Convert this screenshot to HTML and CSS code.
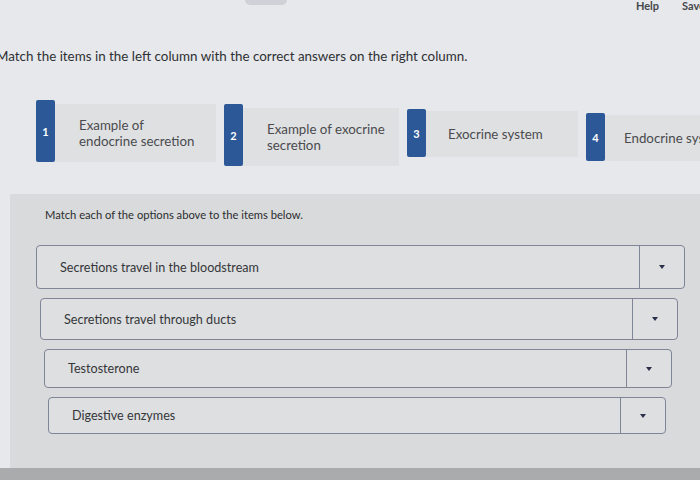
FILE: index.html
```html
<!DOCTYPE html>
<html>
<head>
<meta charset="utf-8">
<link rel="stylesheet" href="styles.css">
</head>
<body>
<div class="page">
  <div class="topbar">
    <span class="thumb"></span>
    <nav class="links"><span class="link">Help</span><span class="link">Save</span></nav>
  </div>
  <p class="title">Match the items in the left column with the correct answers on the right column.</p>

  <div class="choices">
    <div class="choice c1"><span class="badge">1</span><span class="label">Example of<br>endocrine secretion</span></div>
    <div class="choice c2"><span class="badge">2</span><span class="label">Example of exocrine<br>secretion</span></div>
    <div class="choice c3"><span class="badge">3</span><span class="label">Exocrine system</span></div>
    <div class="choice c4"><span class="badge">4</span><span class="label">Endocrine system</span></div>
  </div>

  <section class="panel">
    <p class="instr">Match each of the options above to the items below.</p>
    <div class="rows">
      <div class="row r1"><span class="item">Secretions travel in the bloodstream</span><span class="drop"><span class="arrow"></span></span></div>
      <div class="row r2"><span class="item">Secretions travel through ducts</span><span class="drop"><span class="arrow"></span></span></div>
      <div class="row r3"><span class="item">Testosterone</span><span class="drop"><span class="arrow"></span></span></div>
      <div class="row r4"><span class="item">Digestive enzymes</span><span class="drop"><span class="arrow"></span></span></div>
    </div>
  </section>
  <div class="bottom"></div>
</div>
</body>
</html>
```
FILE: styles.css
```css
* { box-sizing: border-box; }
html, body { margin: 0; padding: 0; }
body {
  width: 700px;
  height: 480px;
  overflow: hidden;
  background: #e6e8ec;
  font-family: Lato, "Open Sans", "Liberation Sans", sans-serif;
  color: #3a3b3e;
}
.page { width: 700px; height: 480px; display: flex; flex-direction: column; overflow: hidden; }

.topbar { height: 22px; display: flex; justify-content: space-between; align-items: flex-start; flex-shrink: 0; }
.thumb { margin-left: 245px; width: 42px; height: 5px; background: #cfd1d6; border-radius: 0 0 6px 6px; }
.links { display: flex; gap: 23px; margin-right: -5px; margin-top: -1px; }
.link { font-size: 11px; font-weight: 700; color: #45474b; }

.title { margin: 26px 0 0 -4px; font-size: 13.4px; color: #2f3033; white-space: nowrap; flex-shrink: 0; }

.choices { display: flex; margin: 36px 0 0 36px; height: 64px; flex-shrink: 0; }
.choice { display: flex; width: 184px; flex-shrink: 0; }
.c1 { width: 188px; margin-top: 0; }
.c2 { width: 183px; margin-top: 4px; }
.c3 { width: 179px; margin-top: 9px; }
.c4 { margin-top: 13px; }
.badge {
  flex: 0 0 19px;
  height: 62px;
  background: #2c5897;
  color: #fff;
  font-size: 11px;
  font-weight: 700;
  display: flex;
  align-items: center;
  justify-content: center;
  border-radius: 2px;
}
.c3 .badge { height: 48px; }
.c4 .badge { height: 48px; }
.label {
  flex: 1;
  height: 58px;
  margin: 4px 8px 0 0;
  background: #dfe0e2;
  font-size: 13.3px;
  line-height: 16px;
  color: #4a4b4e;
  display: flex;
  align-items: center;
  padding-left: 24px;
  white-space: nowrap;
}
.c3 .label, .c4 .label { height: 46px; margin-top: 2px; padding-left: 22px; overflow: hidden; }
.c4 .label { margin-right: 0; padding-left: 19px; }

.panel {
  margin: 30px 0 0 10px;
  height: 274px;
  flex-shrink: 0;
  background: #d8dadb;
  padding: 14px 0 0 35px;
}
.instr { margin: 0; font-size: 11.2px; color: #2c2d30; }
.rows { display: flex; flex-direction: column; gap: 9px; margin: 24px 0 0 -9px; }
.row {
  display: flex;
  align-items: center;
  border: 1px solid #7f8497;
  border-radius: 4px;
  background: #dddfe0;
  height: 42px;
}
.r1 { width: 649px; height: 44px; }
.r2 { width: 638px; margin-left: 4px; height: 42px; }
.r3 { width: 628px; margin-left: 8px; height: 39px; }
.r4 { width: 618px; margin-left: 12px; height: 37px; }
.item { flex: 1; padding-left: 23px; font-size: 12.6px; color: #35363a; }
.drop {
  width: 45px;
  align-self: stretch;
  border-left: 1px solid #7f8497;
  display: flex;
  align-items: center;
  justify-content: center;
}
.arrow { width: 0; height: 0; border-left: 3.5px solid transparent; border-right: 3.5px solid transparent; border-top: 4px solid #2b2f4a; }

.bottom { flex: 1; background: #a9abad; }
```
